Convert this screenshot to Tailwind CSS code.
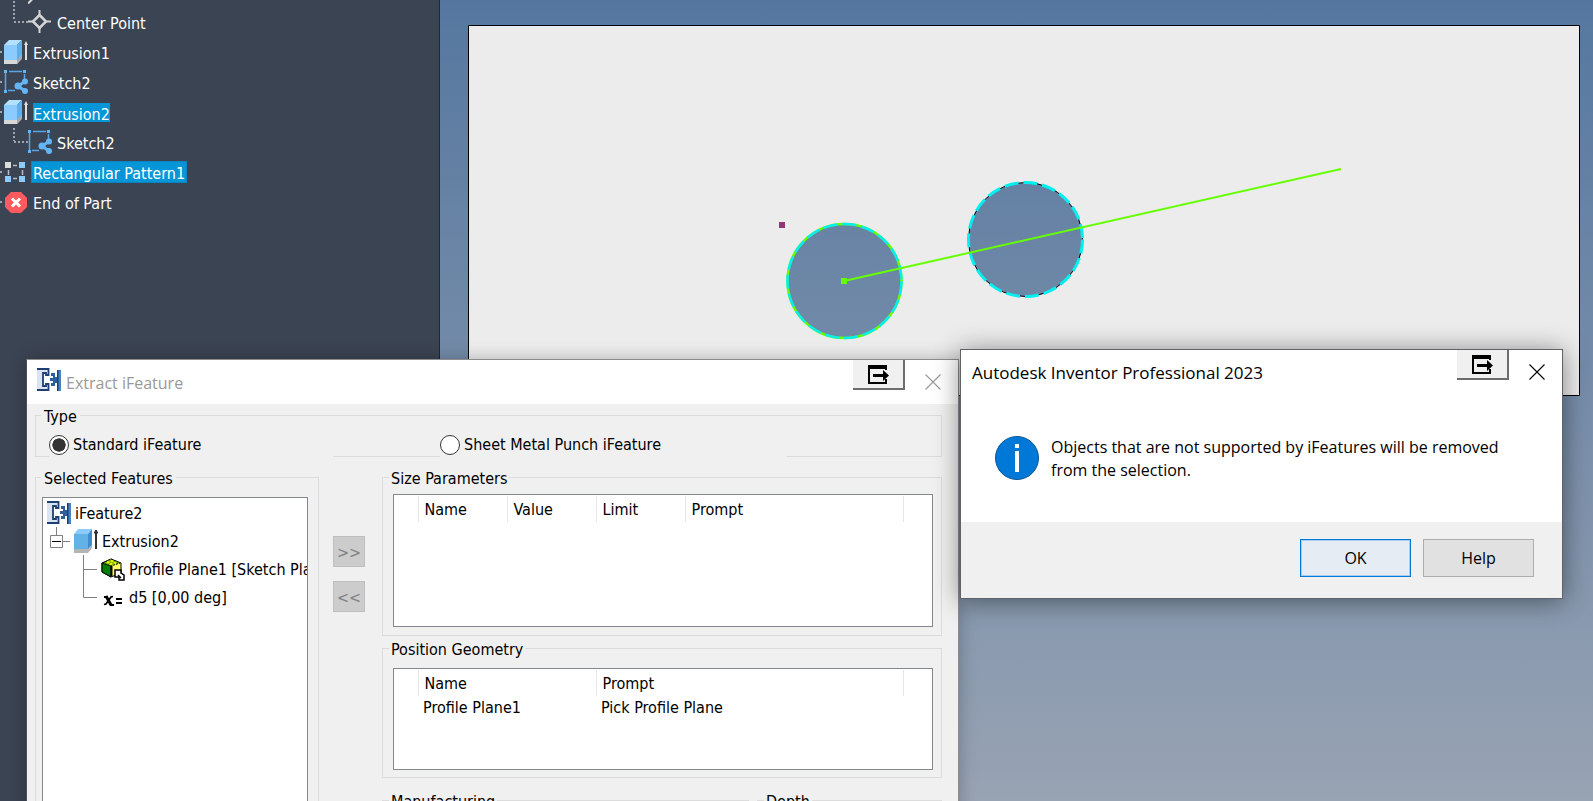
<!DOCTYPE html>
<html lang="en">
<head>
    <meta charset="UTF-8">
    <meta name="viewport" content="width=device-width, initial-scale=1.0">
    <title>Autodesk Inventor Professional 2023</title>
    <script src="https://cdn.jsdelivr.net/npm/@tailwindcss/browser@4"></script>
</head>
<body class="h-screen overflow-hidden text-base text-black font-['DejaVu_Sans_Condensed','Noto_Sans',sans-serif]">

    <!-- Shared icons -->
    <svg class="hidden">
        <symbol id="icon-extrusion" viewBox="0 0 24 24">
            <path d="M0 20H13L18 14V18L13 24H0Z" fill="#d8d8d8"/>
            <path d="M13 24L18 19V15L13 20Z" fill="#a9a9a9"/>
            <path d="M0 5L5 0H18L13 5Z" fill="#b4e0ff"/>
            <path d="M0 5H13V20H0Z" fill="#8ccbfd"/>
            <path d="M13 5L18 0V15L13 20Z" fill="#5db0ec"/>
            <path d="M22 20V3" stroke="#e0e0e0" stroke-width="2"/>
            <path d="M20 5L22 1L24 5Z" fill="#e0e0e0"/>
        </symbol>
        <symbol id="icon-sketch" viewBox="0 0 24 24">
            <path d="M1.500 3V20M5 1.500H18M20.500 4V9M4 20.500H11" stroke="#5aa5e6" stroke-width="1.500" fill="none"/>
            <path d="M0 0H3V3H0ZM19 0H22V3H19ZM0 20H3V23H0Z" fill="#64b5f6"/>
            <path d="M21 11.500L14 16L21 21" stroke="#64b5f6" stroke-width="3" fill="none"/>
            <circle cx="14" cy="16" r="3.500" fill="#64b5f6"/>
            <circle cx="21" cy="11.500" r="3" fill="#64b5f6"/>
            <circle cx="21" cy="21" r="3" fill="#64b5f6"/>
        </symbol>
        <symbol id="icon-ifeature" viewBox="0 0 24 24">
            <path d="M0 1H11V6H6V17H11V22H0Z" fill="#d9e4f0"/>
            <path d="M0 1H11.500V7H9V5H6V18H9V16H11.500V22H0" fill="none" stroke="#1d3f72" stroke-width="1.800"/>
            <path d="M20 2H24V23H20V15H18V18H14V15H16V13H13V10H16V8H14V5H18V9H20Z" fill="#2c5f9c"/>
            <path d="M20.500 2V23" stroke="#1d3f72"/>
            <path d="M23 2V23" stroke="#6fa3d6"/>
        </symbol>
        <symbol id="icon-export" viewBox="0 0 21 19">
            <path d="M0 0H19V5H17V4H2V17H17V14H19V19H0Z" fill="#000"/>
            <path d="M5 9H15V5L21 10.500L15 16V12H5Z" fill="#000"/>
        </symbol>
        <symbol id="icon-close" viewBox="0 0 16 16">
            <path d="M.5 .5L15.500 15.500M15.500 .5L.5 15.500" stroke="currentColor" stroke-width="1.100"/>
        </symbol>
    </svg>

    <main class="relative flex h-full overflow-hidden">

        <!-- Model browser -->
        <aside class="w-[440px] shrink-0 border-r border-[#222831] bg-[#3b4453] text-white">
            <ul class="-mt-[23px]">
                <li class="flex h-[30px] items-center pl-7">
                    <svg class="h-6 w-6" viewBox="0 0 24 24"><path d="M0 23.500L5 18.500" stroke="#d8d8d8" stroke-width="2"/></svg>
                </li>
                <li class="relative flex h-[30px] items-center gap-[5px] pl-7">
                    <svg class="absolute left-3 top-0 h-4 w-4 overflow-visible" viewBox="0 0 16 16"><path d="M2 -6V14M2 15H16" stroke="#a0a5ad" stroke-width="2" stroke-dasharray="2 2" fill="none"/></svg>
                    <svg class="h-6 w-6" viewBox="0 0 24 24">
                        <path d="M11.500 5L18 11.500L11.500 18L5 11.500Z" fill="none" stroke="#d4d4d4" stroke-width="2.500"/>
                        <path d="M11.500 0V5M11.500 18V23M0 11.500H5M18 11.500H23" stroke="#d4d4d4" stroke-width="2"/>
                    </svg>
                    <span class="pt-1">Center Point</span>
                </li>
                <li class="flex h-[30px] items-center gap-[5px]">
                    <span class="-mr-[3px] h-[2px] w-[2px] bg-[#a0a5ad]"></span>
                    <svg class="h-6 w-6"><use href="#icon-extrusion"/></svg>
                    <span class="pt-1">Extrusion1</span>
                </li>
                <li class="flex h-[30px] items-center gap-[5px]">
                    <span class="-mr-[3px] h-[2px] w-[2px] bg-[#a0a5ad]"></span>
                    <svg class="h-6 w-6"><use href="#icon-sketch"/></svg>
                    <span class="pt-1">Sketch2</span>
                </li>
                <li class="flex h-[30px] items-center gap-[5px]">
                    <span class="-mr-[3px] h-[2px] w-[2px] bg-[#a0a5ad]"></span>
                    <svg class="h-6 w-6"><use href="#icon-extrusion"/></svg>
                    <span class="bg-[#0696d7] pt-1 leading-[15px]">Extrusion2</span>
                </li>
                <li class="relative flex h-[30px] items-center gap-[5px] pl-7">
                    <svg class="absolute left-3 top-0 h-4 w-4" viewBox="0 0 16 16"><path d="M2 1V14M2 15H16" stroke="#a0a5ad" stroke-width="2" stroke-dasharray="2 2" fill="none"/></svg>
                    <svg class="h-6 w-6"><use href="#icon-sketch"/></svg>
                    <span class="pt-1">Sketch2</span>
                </li>
                <li class="flex h-[30px] items-center gap-[3px]">
                    <span class="-mr-px h-[2px] w-[2px] bg-[#a0a5ad]"></span>
                    <svg class="h-6 w-6" viewBox="0 0 24 24">
                        <path d="M9 5.500H13M4.500 10V15M18.500 10V15M9 18.500H13" stroke="#b8bcc2" stroke-width="1.500"/>
                        <path d="M1 2H7V8H1Z" fill="#dcdcdc"/>
                        <path d="M15 2H21V8H15ZM1 16H7V22H1ZM15 16H21V22H15Z" fill="#8ccbfd"/>
                    </svg>
                    <span class="border border-[#0a84c0] bg-[#0696d7] px-px pt-1 leading-4">Rectangular Pattern1</span>
                </li>
                <li class="flex h-[30px] items-center gap-[5px]">
                    <span class="-mr-[3px] h-[2px] w-[2px] bg-[#a0a5ad]"></span>
                    <svg class="h-6 w-6" viewBox="0 0 24 24">
                        <path d="M7 2H17L23 8V17L17 23H7L1 17V8Z" fill="#ff5a5f"/>
                        <path d="M8 8.500L16 16.500M16 8.500L8 16.500" stroke="#fff" stroke-width="3"/>
                    </svg>
                    <span class="pt-1">End of Part</span>
                </li>
            </ul>
        </aside>

        <!-- Graphics window -->
        <section class="min-w-0 flex-1 bg-linear-to-b from-[#55779f] to-[#98a3b3]">
            <svg class="block h-full w-full">
                <path fill-rule="evenodd" fill="#ececec" stroke="none"
                    d="M28.500 25.500H1139.500V395.500H28.500ZM347.500 281a57 57 0 1 0 114 0a57 57 0 1 0 -114 0ZM528.500 239.500a57 57 0 1 0 114 0a57 57 0 1 0 -114 0Z"/>
                <path fill="none" stroke="#000" d="M28.500 25.500H1139.500V395.500H28.500Z"/>
                <circle cx="404.500" cy="281" r="57" fill="none" stroke="#66ff00" stroke-width="2.500"/>
                <circle cx="404.500" cy="281" r="57" fill="none" stroke="#00f0f0" stroke-width="2.500" stroke-dasharray="14 5"/>
                <circle cx="585.500" cy="239.500" r="57" fill="none" stroke="#000" stroke-width="1"/>
                <circle cx="585.500" cy="239.500" r="57" fill="none" stroke="#00f0f0" stroke-width="3" stroke-dasharray="14 5"/>
                <path d="M404 281L901 169" stroke="#66ff00" stroke-width="2"/>
                <path d="M401 278H407V284H401Z" fill="#66ff00"/>
                <path d="M339 222H345V228H339Z" fill="#993377"/>
            </svg>
        </section>

        <!-- Extract iFeature dialog -->
        <div role="dialog" aria-labelledby="extract-title" class="absolute left-[26px] top-[359px] w-[933px] border border-[#8c8c8c] border-l-[#4a5260] bg-[#f0f0f0] shadow-[0_0_16px_rgba(0,0,0,0.25)]">
            <header class="flex h-11 items-start bg-white pl-[10px] pr-[17px] text-[#999]">
                <svg class="mt-2 h-6 w-6"><use href="#icon-ifeature"/></svg>
                <h1 id="extract-title" class="ml-[5px] mt-[11px] flex-1 leading-6 font-['Open_Sans',sans-serif]">Extract iFeature</h1>
                <button aria-label="Move to other screen" class="flex h-[30px] w-[52px] items-center justify-center border-b-2 border-r-2 border-[#6d6d6d] bg-[#f0f0f0]">
                    <svg class="h-[19px] w-[21px]"><use href="#icon-export"/></svg>
                </button>
                <button aria-label="Close" class="ml-5 mt-[14px]"><svg class="h-4 w-4"><use href="#icon-close"/></svg></button>
            </header>

            <div class="flex h-[500px] flex-col gap-[9px] pl-2 pr-4">
                <fieldset class="border border-[#dcdcdc] pl-[13px]">
                    <legend class="-ml-2 px-[3px] pt-[3px] leading-[19px]">Type</legend>
                    <div class="-mb-px flex">
                        <label class="flex h-[31px] w-[284px] items-center gap-1 bg-[#f0f0f0] pt-[6px]">
                            <input type="radio" name="type" checked class="h-5 w-5 appearance-none rounded-full border border-[#333] bg-white bg-radial from-[#333] from-50% to-white to-54% bg-center">
                            Standard iFeature
                        </label>
                        <label class="ml-[107px] flex h-[31px] w-[347px] items-center gap-1 bg-[#f0f0f0] pt-[6px]">
                            <input type="radio" name="type" class="h-5 w-5 appearance-none rounded-full border border-[#333] bg-white">
                            Sheet Metal Punch iFeature
                        </label>
                    </div>
                </fieldset>

                <div class="flex min-h-0 flex-1">
                    <fieldset class="w-[284px] border border-[#dcdcdc] px-[6px]">
                        <legend class="ml-[-1px] px-[3px] pt-[3px] leading-[19px]">Selected Features</legend>
                        <ul class="mt-[9px] h-[460px] w-[266px] overflow-hidden whitespace-nowrap border border-[#828790] bg-white pl-1 pt-[1px] *:flex *:h-7 *:items-center">
                            <li>
                                <svg class="h-6 w-6 shrink-0"><use href="#icon-ifeature"/></svg>
                                <span class="ml-1 pt-0.5">iFeature2</span>
                            </li>
                            <li>
                                <svg class="h-7 w-[27px] shrink-0" viewBox="0 0 27 28"><path d="M9.500 0V8M3.500 8.500H15.500V20.500H3.500ZM16 14.500H23" fill="none" stroke="#808080"/><path d="M5 14.500H14" stroke="#000"/></svg>
                                <svg class="h-6 w-6 shrink-0" viewBox="0 0 24 24">
                                    <path d="M0 20H14L18 16V19L14 24H0Z" fill="#b4b4b4"/>
                                    <path d="M0 5L4 0H18L14 5Z" fill="#8ccbfd"/>
                                    <path d="M0 5H14V20H0Z" fill="#62b2e8"/>
                                    <path d="M14 5L18 0V16L14 20Z" fill="#3f8ecb"/>
                                    <path d="M22 20V1M20 3.500H24" stroke="#333" stroke-width="2"/>
                                </svg>
                                <span class="ml-1 pt-0.5">Extrusion2</span>
                            </li>
                            <li>
                                <svg class="ml-[27px] h-7 w-[27px] shrink-0" viewBox="0 0 27 28"><path d="M9.500 0V28M9.500 14.500H23" fill="none" stroke="#808080"/></svg>
                                <svg class="h-6 w-6 shrink-0" viewBox="0 0 24 24">
                                    <path d="M1 6L10 2L20 6V16L10 20L1 15Z" fill="#ffff66" stroke="#000"/>
                                    <path d="M1 6L10 9V20L1 15Z" fill="#008000" stroke="#000"/>
                                    <path d="M2 6L10 2L19 6L10 9Z" fill="#8cc800" stroke="#000" stroke-dasharray="2 1"/>
                                    <path d="M6 5H8M10 4H12M9 7H11M13 6H15" stroke="#ffff00" stroke-width="1.500"/>
                                    <path d="M10.500 9V19" stroke="#000" stroke-width="2"/>
                                    <path d="M14 13H20V16L23 18V23H18V20H14Z" fill="#fff" stroke="#000" stroke-width="1.500"/>
                                    <path d="M17 18L20 21" stroke="#000" stroke-width="1.500"/>
                                </svg>
                                <span class="ml-1 pt-0.5">Profile Plane1 [Sketch Plane]</span>
                            </li>
                            <li>
                                <svg class="ml-[27px] h-7 w-[27px] shrink-0" viewBox="0 0 27 28"><path d="M9.500 0V14.500H23" fill="none" stroke="#808080"/></svg>
                                <svg class="h-6 w-6 shrink-0" viewBox="0 0 24 24">
                                    <path d="M5 11L10 20" stroke="#000" stroke-width="3"/>
                                    <path d="M3 12H6M9 20H13M12 11.500L10 12L5 19L3 19.500" fill="none" stroke="#000" stroke-width="1.800"/>
                                    <path d="M15 14H21M15 18H21" stroke="#000" stroke-width="2"/>
                                </svg>
                                <span class="ml-1 pt-0.5">d5 [0,00 deg]</span>
                            </li>
                        </ul>
                    </fieldset>

                    <div class="mx-[14px] mt-[70px] flex w-8 flex-col gap-[14px]">
                        <button disabled class="h-[31px] w-8 border border-[#bfbfbf] bg-[#ccc] pt-0.5 text-[#838383]">&gt;&gt;</button>
                        <button disabled class="h-[31px] w-8 border border-[#bfbfbf] bg-[#ccc] pt-0.5 text-[#838383]">&lt;&lt;</button>
                    </div>

                    <div class="ml-[3px] min-w-0 flex-1">
                        <fieldset class="h-[170px] border border-[#dcdcdc] pl-[10px] pr-2">
                            <legend class="-ml-1 px-[2px] pt-[3px] leading-[19px]">Size Parameters</legend>
                            <div class="mt-[6px] h-[133px] border border-[#828790] bg-white pt-px">
                                <table class="w-full table-fixed text-left">
                                    <thead>
                                        <tr class="h-[25px] *:border-r *:border-[#e5e5e5] *:p-0 *:pl-[6px] *:pt-0.5 *:font-normal *:last:border-0">
                                            <th class="w-6"></th>
                                            <th class="w-[89px]">Name</th>
                                            <th class="w-[89px]">Value</th>
                                            <th class="w-[89px]">Limit</th>
                                            <th class="w-[218px]">Prompt</th>
                                            <th></th>
                                        </tr>
                                    </thead>
                                </table>
                            </div>
                        </fieldset>
                        <fieldset class="mt-px h-[141px] border border-[#dcdcdc] pl-[10px] pr-2">
                            <legend class="-ml-1 px-[2px] pt-[3px] leading-[19px]">Position Geometry</legend>
                            <div class="mt-[9px] h-[102px] border border-[#828790] bg-white pt-px">
                                <table class="w-full table-fixed text-left">
                                    <thead>
                                        <tr class="h-[25px] *:border-r *:border-[#e5e5e5] *:p-0 *:pl-[6px] *:pt-0.5 *:font-normal *:last:border-0">
                                            <th class="w-6"></th>
                                            <th class="w-[178px]">Name</th>
                                            <th class="w-[307px]">Prompt</th>
                                            <th></th>
                                        </tr>
                                    </thead>
                                    <tbody>
                                        <tr class="*:p-0 *:pl-[5px]">
                                            <td></td>
                                            <td>Profile Plane1</td>
                                            <td>Pick Profile Plane</td>
                                            <td></td>
                                        </tr>
                                    </tbody>
                                </table>
                            </div>
                        </fieldset>
                        <div class="mt-[11px] flex gap-2">
                            <fieldset class="h-20 w-[367px] border border-[#dcdcdc] pl-[10px]">
                                <legend class="-ml-1 px-[2px] pt-[3px] leading-[19px]">Manufacturing</legend>
                            </fieldset>
                            <fieldset class="h-20 flex-1 border border-[#dcdcdc] pl-[10px]">
                                <legend class="-ml-1 px-[2px] pt-[3px] leading-[19px]">Depth</legend>
                            </fieldset>
                        </div>
                    </div>
                </div>
            </div>
        </div>

        <!-- Message box -->
        <div role="alertdialog" aria-labelledby="message-title" class="absolute left-[960px] top-[349px] w-[603px] border border-[#5f6368] bg-white font-['Open_Sans',sans-serif] shadow-[0_2px_24px_rgba(0,0,0,0.45)]">
            <header class="flex h-11 items-start pl-[11px] pr-[17px]">
                <h2 id="message-title" class="mt-[11px] flex-1 text-[17px] leading-6">Autodesk Inventor Professional 2023</h2>
                <button aria-label="Move to other screen" class="flex h-[30px] w-[52px] items-center justify-center border-b-2 border-r-2 border-[#6d6d6d] bg-[#f0f0f0]">
                    <svg class="h-[19px] w-[21px]"><use href="#icon-export"/></svg>
                </button>
                <button aria-label="Close" class="ml-5 mt-[14px]"><svg class="h-4 w-4"><use href="#icon-close"/></svg></button>
            </header>
            <div class="flex h-32 items-start pl-[34px] pr-10 pt-[42px]">
                <svg class="h-11 w-11 shrink-0" viewBox="0 0 44 44">
                    <circle cx="22" cy="22" r="21.500" fill="#0078d7" stroke="#0a5596"/>
                    <path d="M20 8H24V12H20ZM20 15H24V36H20Z" fill="#fff"/>
                </svg>
                <p class="ml-3 leading-[23px]">Objects that are not supported by iFeatures will be removed<br>from the selection.</p>
            </div>
            <footer class="flex justify-end gap-3 bg-[#f0f0f0] pb-[21px] pl-4 pr-7 pt-[17px]">
                <button class="h-[38px] w-[111px] border border-[#0078d7] bg-[#e5ecf3] shadow-[inset_0_0_0_1px_#a6cdef]">OK</button>
                <button class="h-[38px] w-[111px] border border-[#adadad] bg-[#e1e1e1]">Help</button>
            </footer>
        </div>
    </main>

</body>
</html>
